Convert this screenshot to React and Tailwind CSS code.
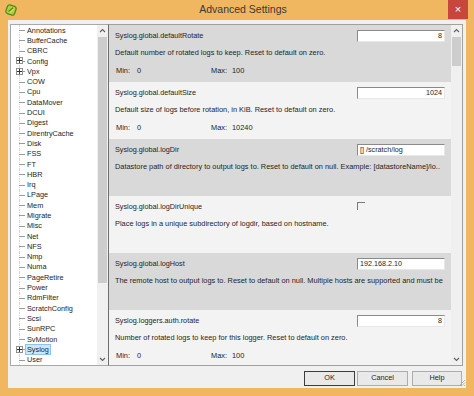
import React from "react";

const treeItems = [
  ["Annotations"], ["BufferCache"], ["CBRC"], ["Config", true], ["Vpx", true], ["COW"], ["Cpu"],
  ["DataMover"], ["DCUI"], ["Digest"], ["DirentryCache"], ["Disk"], ["FSS"], ["FT"], ["HBR"],
  ["Irq"], ["LPage"], ["Mem"], ["Migrate"], ["Misc"], ["Net"], ["NFS"], ["Nmp"], ["Numa"],
  ["PageRetire"], ["Power"], ["RdmFilter"], ["ScratchConfig"], ["Scsi"], ["SunRPC"], ["SvMotion"],
  ["Syslog", true, true], ["User"],
];

const settings = [
  { title: "Syslog.global.defaultRotate", desc: "Default number of rotated logs to keep. Reset to default on zero.", type: "num", value: "8", min: "0", max: "100" },
  { title: "Syslog.global.defaultSize", desc: "Default size of logs before rotation, in KiB. Reset to default on zero.", type: "num", value: "1024", min: "0", max: "10240" },
  { title: "Syslog.global.logDir", desc: "Datastore path of directory to output logs to. Reset to default on null. Example: [datastoreName]/lo..", type: "text", value: "[] /scratch/log" },
  { title: "Syslog.global.logDirUnique", desc: "Place logs in a unique subdirectory of logdir, based on hostname.", type: "check" },
  { title: "Syslog.global.logHost", desc: "The remote host to output logs to. Reset to default on null. Multiple hosts are supported and must be", type: "text", value: "192.168.2.10" },
  { title: "Syslog.loggers.auth.rotate", desc: "Number of rotated logs to keep for this logger. Reset to default on zero.", type: "num", value: "8", min: "0", max: "100" },
];

function Chevron({ up }) {
  return (
    <svg width="7" height="5" viewBox="0 0 7 5">
      <polyline
        points={up ? "1,4 3.5,1.5 6,4" : "1,1 3.5,3.5 6,1"}
        fill="none"
        stroke="#606060"
        strokeWidth="1.1"
      />
    </svg>
  );
}

function ScrollBar({ thumbTop, thumbHeight }) {
  return (
    <div className="w-[11px] shrink-0 bg-[#f0f0f0] flex flex-col">
      <div className="h-[11px] flex items-center justify-center shrink-0">
        <Chevron up />
      </div>
      <div className="flex-1 flex flex-col px-[1px]">
        <div className="shrink-0" style={{ height: thumbTop }} />
        <div className="bg-[#cdcdcd] shrink-0" style={{ height: thumbHeight }} />
      </div>
      <div className="h-[11px] flex items-center justify-center shrink-0">
        <Chevron />
      </div>
    </div>
  );
}

function TreeItem({ name, expandable, selected }) {
  return (
    <div className="h-[10.3px] flex items-center">
      <div className="w-[15px] h-full relative shrink-0">
        <div className="absolute left-[8px] top-0 bottom-0 border-l border-dotted border-[#d4d4d4]" />
        <div className="absolute left-[8px] w-[6px] top-1/2 border-t border-[#9a9a9a]" />
        {expandable && (
          <div className="absolute left-[5px] top-[1.5px] w-[7px] h-[7px] border border-[#8f8f8f] bg-white flex items-center justify-center">
            <div className="relative w-[5px] h-[5px]">
              <div className="absolute left-0 right-0 top-[2px] h-[1px] bg-[#333]" />
              <div className="absolute top-0 bottom-0 left-[2px] w-[1px] bg-[#333]" />
            </div>
          </div>
        )}
      </div>
      <span
        className={`text-[7.3px] leading-[9px] px-[1px] whitespace-nowrap text-[#1e1e1e] ${
          selected ? "bg-[#cce8ff] outline outline-1 outline-[#8fc3ee]" : ""
        }`}
      >
        {name}
      </span>
    </div>
  );
}

function Row({ s, dark }) {
  return (
    <div
      className={`h-[57px] shrink-0 overflow-hidden pt-[5px] pl-[6px] pr-[6px] text-[7.4px] text-[#1e1e1e] ${
        dark ? "bg-[#d9d9d9]" : "bg-[#f3f3f3]"
      }`}
    >
      <div className="h-[12px] flex items-center justify-between">
        <span className="whitespace-nowrap leading-[10px] text-[7.25px]">{s.title}</span>
        <div className="w-[88px] h-[12px] shrink-0">
          {s.type === "check" ? (
            <div className="w-[8px] h-[8px] mt-[1px] border-t border-l border-[#7a7a7a]" />
          ) : (
            <div
              className={`w-full h-full bg-white border-t border-l border-[#8a8a8a] border-b border-r border-b-[#e8e8e8] border-r-[#e8e8e8] flex items-center px-[2px] leading-[10px] text-[7.2px] ${
                s.type === "num" ? "justify-end" : "justify-start"
              }`}
            >
              {s.value}
            </div>
          )}
        </div>
      </div>
      <div className="mt-[6px] leading-[10px] whitespace-nowrap">{s.desc}</div>
      {s.min !== undefined && (
        <div className="mt-[8px] leading-[10px] flex whitespace-nowrap pl-[1px]">
          <span className="w-[21px]">Min:</span>
          <span className="w-[74px]">{s.min}</span>
          <span className="w-[21px]">Max:</span>
          <span>{s.max}</span>
        </div>
      )}
    </div>
  );
}

function Button({ children, primary, className = "" }) {
  return (
    <div
      className={`h-[15px] flex items-center justify-center text-[7.3px] text-[#1e1e1e] bg-[#e9e9e9] border ${
        primary ? "border-[#3c3c3c]" : "border-[#adadad]"
      } ${className}`}
    >
      {children}
    </div>
  );
}

export default function App() {
  return (
    <div className="w-[474px] h-[396px] bg-[#f0b660] flex flex-col overflow-hidden font-['Liberation_Sans',Arial,sans-serif]">
      {/* Title bar */}
      <div className="h-[20px] shrink-0 flex items-start">
        <div className="w-[40px] h-[20px] pl-[5px] pt-[4px] shrink-0">
          <svg width="12" height="12" viewBox="0 0 12 12">
            <rect x="1.5" y="1.5" width="9" height="9" rx="2.5" transform="rotate(20 6 6)" fill="#b5cf3a" stroke="#4e8a22" strokeWidth="1.3" />
            <path d="M3.5 7.5 L8 3.8" stroke="#4e8a22" strokeWidth="1.2" />
            <path d="M4.5 8.8 L8.8 5.2" stroke="#f3e27a" strokeWidth="0.9" />
          </svg>
        </div>
        <div className="flex-1 h-[20px] flex items-center justify-center text-[10.5px] text-[#3a3a3a] pl-[6px]">
          Advanced Settings
        </div>
        <div className="w-[20px] h-[19px] bg-[#c8473d] mr-[6px] ml-[8px] flex items-center justify-center text-white text-[11px] leading-none">
          ×
        </div>
      </div>

      {/* Body */}
      <div className="flex-1 mx-[8px] mb-[8px] bg-[#f0f0f0] flex flex-col pt-[4px] pl-[2px] pr-[3px]">
        <div className="h-[342px] flex shrink-0">
          {/* Tree */}
          <div className="w-[98px] shrink-0 border border-[#a9a9a9] border-r-0 bg-white flex">
            <div className="flex-1 overflow-hidden">
              {treeItems.map(([n, e, s]) => (
                <TreeItem key={n} name={n} expandable={e} selected={s} />
              ))}
            </div>
            <ScrollBar thumbTop={1} thumbHeight={246} />
          </div>
          {/* Settings */}
          <div className="flex-1 border border-[#a0a0a0] border-l-[#6e6e6e] flex overflow-hidden">
            <div className="flex-1 flex flex-col overflow-hidden">
              {settings.map((s, i) => (
                <Row key={s.title} s={s} dark={i % 2 === 0} />
              ))}
            </div>
            <ScrollBar thumbTop={1} thumbHeight={29} />
          </div>
        </div>

        {/* Buttons */}
        <div className="mt-[5px] flex justify-end items-start pr-[1px] relative">
          <Button primary className="w-[51px]">OK</Button>
          <Button className="w-[51px] ml-[2px]">Cancel</Button>
          <Button className="w-[50px] ml-[4px]">Help</Button>
          <svg className="absolute right-[-3px] top-[8px]" width="8" height="8" viewBox="0 0 8 8">
            <path d="M7 1 L1 7 M7 3.5 L3.5 7 M7 6 L6 7" stroke="#a8a8a8" strokeWidth="0.8" />
          </svg>
        </div>
      </div>
    </div>
  );
}
